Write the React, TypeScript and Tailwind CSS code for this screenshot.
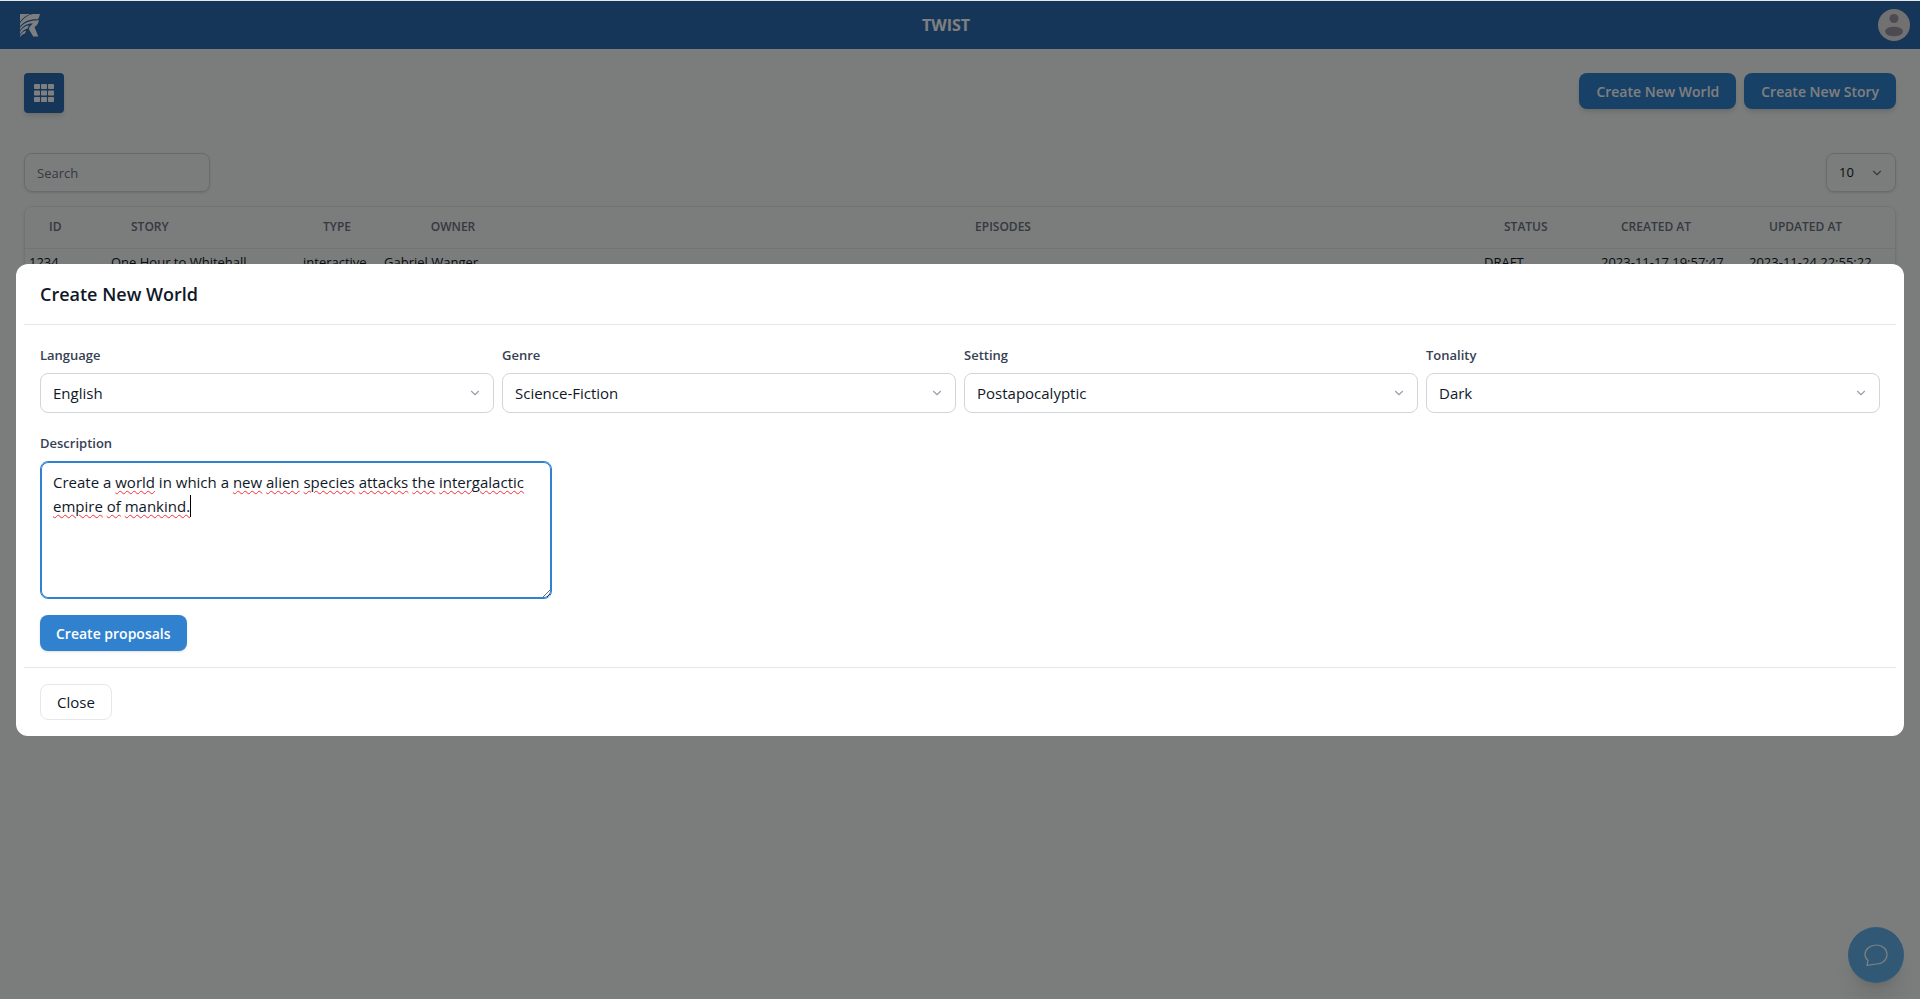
import { useState } from 'react'
import { ChevronDown } from 'lucide-react'

interface Story {
  id: number
  name: string
  type: string
  owner: string
  status: string
  createdAt: string
  updatedAt: string
}

const stories: Story[] = [
  {
    id: 1234,
    name: 'One Hour to Whitehall',
    type: 'interactive',
    owner: 'Gabriel Wanger',
    status: 'DRAFT',
    createdAt: '2023-11-17 19:57:47',
    updatedAt: '2023-11-24 22:55:22',
  },
]

const columns = [
  { label: 'ID', className: 'w-[82px] text-left' },
  { label: 'Story', className: 'w-48 text-left' },
  { label: 'Type', className: 'w-[81px] text-left' },
  { label: 'Owner', className: 'w-[146px] text-center' },
  { label: 'Episodes', className: 'text-center' },
  { label: 'Status', className: 'w-[117px] text-left' },
  { label: 'Created at', className: 'w-[148px] text-left' },
  { label: 'Updated at', className: 'w-[150px] text-left' },
]

const worldFields = [
  { id: 'language', label: 'Language', options: ['English', 'German'] },
  { id: 'genre', label: 'Genre', options: ['Science-Fiction', 'Fantasy'] },
  { id: 'setting', label: 'Setting', options: ['Postapocalyptic', 'Medieval'] },
  { id: 'tonality', label: 'Tonality', options: ['Dark', 'Light'] },
]

const knownWords = ['Create', 'a', 'in', 'which']

function Logo() {
  return (
    <svg viewBox="0 0 20 23" className="h-[23px] w-5" fill="currentColor">
      <path d="M0 0H10.500C6 1.500 2.500 4 0 7.800Z" />
      <path d="M20 0C19.600 2 19 3.800 18 5.300C10 4.800 4 7.300 0 12.300V9.300C3 4.500 8 0.800 13 0Z" />
      <path d="M18.900 6.200C18.600 9 17 11.500 14.500 13L18.300 22.500H13.200L8.800 15C9.300 12.800 11 11 13 9.500C8 9 3 11.500 0 16.200V13.700C4 8.800 10 6 18.900 6.200Z" />
      <path d="M0 17.700C2 14.200 5 11.900 9.200 11.200L7.500 14.600C4.500 15.300 2 17.400 0 20.200Z" />
      <path d="M0 21.700C1.500 19 3.500 17.200 6.200 16.600L5 19.600C3 20.100 1.500 21.500 0 23Z" />
    </svg>
  )
}

function GridIcon() {
  return (
    <svg viewBox="0 0 20 18" className="h-[18px] w-5" fill="currentColor">
      {[0, 7, 14].map((x) =>
        [0, 6.5, 13].map((y) => <rect key={`${x}-${y}`} x={x} y={y} width="6" height="5" rx="0.8" />)
      )}
    </svg>
  )
}

function SpellingMarks({ text }: { text: string }) {
  return (
    <div
      aria-hidden="true"
      className="pointer-events-none absolute inset-0 whitespace-pre-wrap border border-transparent px-3 py-2 text-[15px] leading-6 text-transparent"
    >
      {text.split(' ').map((word, i) => (
        <span key={i}>
          {i > 0 && ' '}
          <span
            className={
              knownWords.includes(word)
                ? ''
                : 'underline decoration-red-500 decoration-wavy decoration-1 underline-offset-2'
            }
          >
            {word}
          </span>
        </span>
      ))}
      <span className="border-l border-black py-px" />
    </div>
  )
}

function CreateWorldModal({ onClose }: { onClose: () => void }) {
  const [description, setDescription] = useState(
    'Create a world in which a new alien species attacks the intergalactic empire of mankind.'
  )

  return (
    <div className="fixed inset-x-0 top-px bottom-0 z-20 flex items-center bg-black/50 px-4">
      <div role="dialog" aria-labelledby="modal-title" className="w-full rounded-xl bg-white p-2">
        <div className="border-b border-gray-200 px-4 pt-2 pb-4">
          <h3 id="modal-title" className="text-[18px] leading-7 font-semibold text-gray-900">
            Create New World
          </h3>
        </div>

        <div className="p-4">
          <div className="grid grid-cols-4 gap-2">
            {worldFields.map((field) => (
              <div key={field.id}>
                <label htmlFor={field.id} className="mt-1 mb-2 block text-[13px] leading-5 font-semibold text-gray-700">
                  {field.label}
                </label>
                <div className="relative">
                  <select
                    id={field.id}
                    className="h-10 w-full appearance-none rounded-lg border border-gray-300 bg-white px-3 text-[15px] text-gray-900"
                  >
                    {field.options.map((option) => (
                      <option key={option}>{option}</option>
                    ))}
                  </select>
                  <ChevronDown size={14} className="pointer-events-none absolute top-[13px] right-3 text-gray-400" />
                </div>
              </div>
            ))}
          </div>

          <label htmlFor="description" className="mt-5 mb-2 block text-[13px] leading-5 font-semibold text-gray-700">
            Description
          </label>
          <div className="relative h-[138px] max-w-lg">
            <textarea
              id="description"
              value={description}
              onChange={(e) => setDescription(e.target.value)}
              spellCheck={false}
              className="block h-full w-full rounded-lg border border-[#3182ce] px-3 py-2 text-[15px] leading-6 text-gray-900 caret-transparent ring-1 ring-[#3182ce] outline-none ring-inset"
            />
            <SpellingMarks text={description} />
          </div>

          <button className="mt-4 block h-9 rounded-lg bg-[#3182ce] px-4 text-[14px] font-semibold text-white shadow-sm">
            Create proposals
          </button>
        </div>

        <div className="border-t border-gray-200 px-4 pt-4 pb-2">
          <button
            onClick={onClose}
            className="block h-9 rounded-lg border border-gray-200 px-4 text-[15px] font-medium text-gray-900"
          >
            Close
          </button>
        </div>
      </div>
    </div>
  )
}

export default function App() {
  const [isModalOpen, setIsModalOpen] = useState(true)

  return (
    <div className="min-h-screen border-t border-gray-200 bg-[#f7faf9] font-['Open_Sans','Noto_Sans',sans-serif]">
      {/* Header */}
      <header className="flex h-12 items-center justify-between bg-[#2b6cb0] pr-[10px] pl-5 text-white">
        <Logo />
        <h1 className="text-[16px] font-bold">TWIST</h1>
        <button aria-label="Profile" className="pl-[26px]">
          <svg viewBox="0 0 32 32" className="size-8">
            <circle cx="16" cy="16" r="16" fill="#e2e2e5" />
            <circle cx="16" cy="9.500" r="4.500" fill="#9c95a5" />
            <ellipse cx="16" cy="22.500" rx="9" ry="4.800" fill="#9c95a5" />
          </svg>
        </button>
      </header>

      <main className="p-6">
        <div className="flex items-start justify-between">
          <button
            aria-label="Overview"
            className="flex size-10 items-center justify-center rounded bg-[#2b6cb0] text-white shadow-md"
          >
            <GridIcon />
          </button>
          <div className="flex gap-2">
            <button
              onClick={() => setIsModalOpen(true)}
              className="h-9 rounded-lg bg-[#3182ce] px-[17px] text-[14px] font-semibold text-white shadow-md"
            >
              Create New World
            </button>
            <button className="h-9 rounded-lg bg-[#3182ce] px-[17px] text-[14px] font-semibold text-white shadow-md">
              Create New Story
            </button>
          </div>
        </div>

        {/* Filters */}
        <div className="mt-10 flex justify-between">
          <input
            type="text"
            aria-label="Search"
            placeholder="Search"
            className="h-[39px] w-[186px] rounded-lg border border-gray-300 px-3 text-[13px] shadow-sm placeholder:text-gray-500"
          />
          <div className="relative">
            <select
              aria-label="Rows per page"
              className="h-[39px] w-[70px] appearance-none rounded-lg border border-gray-300 px-3 text-[13px] text-gray-900 shadow-sm"
            >
              <option>10</option>
              <option>25</option>
              <option>50</option>
            </select>
            <ChevronDown size={14} className="pointer-events-none absolute top-[13px] right-3 text-gray-500" />
          </div>
        </div>

        {/* Stories */}
        <div className="mt-[14px] overflow-hidden rounded-lg border border-gray-200 shadow-sm">
          <table className="w-full table-fixed">
            <thead>
              <tr className="h-[41px] border-b border-gray-200">
                {columns.map((column) => (
                  <th
                    key={column.label}
                    className={`px-6 text-[12px] font-semibold whitespace-nowrap text-gray-500 uppercase ${column.className}`}
                  >
                    {column.label}
                  </th>
                ))}
              </tr>
            </thead>
            <tbody>
              {stories.map((story) => (
                <tr key={story.id} className="text-[13px] leading-[26px] whitespace-nowrap text-gray-900">
                  <td className="px-1">{story.id}</td>
                  <td className="px-1">{story.name}</td>
                  <td className="px-1">{story.type}</td>
                  <td className="px-1">{story.owner}</td>
                  <td className="px-1" />
                  <td className="px-1">{story.status}</td>
                  <td className="px-1">{story.createdAt}</td>
                  <td className="px-1">{story.updatedAt}</td>
                </tr>
              ))}
            </tbody>
          </table>
        </div>
      </main>

      {/* Chat */}
      <button
        aria-label="Open chat"
        className="fixed right-4 bottom-4 z-10 flex size-14 items-center justify-center rounded-full bg-[#63b3ed] text-white shadow-xl"
      >
        <svg viewBox="0 0 24 22" className="h-[22px] w-6" fill="none" stroke="currentColor" strokeWidth="1.200">
          <path d="M12.500 1C18.500 1 23 5 23 10.500S18.500 20 12.500 20L3 21.300L4 16.500C2.200 15 1 12.800 1 10.500C1 5 6 1 12.500 1Z" strokeLinejoin="round" />
        </svg>
      </button>

      {isModalOpen && <CreateWorldModal onClose={() => setIsModalOpen(false)} />}
    </div>
  )
}
